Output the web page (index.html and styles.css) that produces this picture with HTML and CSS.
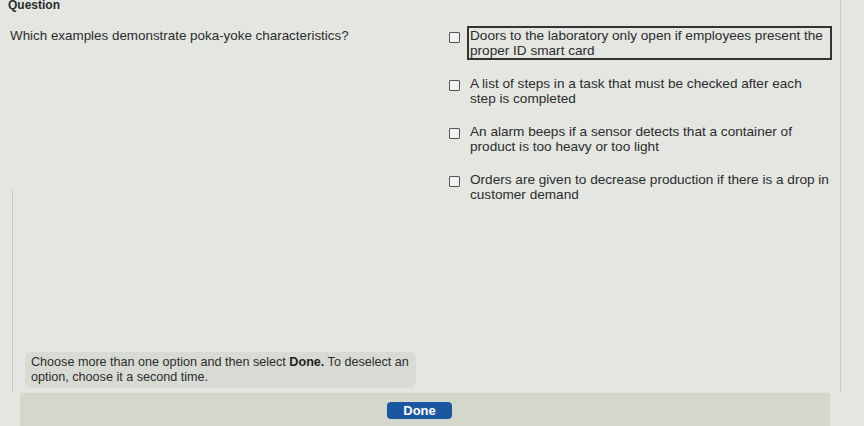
FILE: index.html
```html
<!DOCTYPE html>
<html lang="en">
<head>
<meta charset="UTF-8">
<meta name="viewport" content="width=device-width, initial-scale=1.0">
<title>Question</title>
<link rel="stylesheet" href="styles.css">
</head>
<body>

<div class="panel">
    <div class="titulo">Question</div>

    <div class="pergunta">
        <p class="enunciado">Which examples demonstrate poka-yoke characteristics?</p>

        <div class="opcoes">
            <label class="opcao ativa">
                <span class="caixa"></span>
                <span class="texto">Doors to the laboratory only open if employees present the proper ID smart card</span>
            </label>
            <label class="opcao">
                <span class="caixa"></span>
                <span class="texto">A list of steps in a task that must be checked after each step is completed</span>
            </label>
            <label class="opcao">
                <span class="caixa"></span>
                <span class="texto">An alarm beeps if a sensor detects that a container of product is too heavy or too light</span>
            </label>
            <label class="opcao">
                <span class="caixa"></span>
                <span class="texto">Orders are given to decrease production if there is a drop in customer demand</span>
            </label>
        </div>
    </div>

    <div class="dica">Choose more than one option and then select <b>Done.</b> To deselect an option, choose it a second time.</div>

    <div class="rodape">
        <button class="btn-done">Done</button>
    </div>
</div>

</body>
</html>
```

FILE: styles.css
```css
:root {
    --bg: #e3e6e1;
    --text: #2c2c2c;
    --linha: #c5cac4;
    --azul: #1b56a0;
}
body {
    margin: 0;
    width: 864px;
    height: 426px;
    overflow: hidden;
    background: var(--bg);
    color: var(--text);
    font-family: "Liberation Sans", Arial, sans-serif;
    font-size: 13px;
}
.panel {
    height: 426px;
    display: flex;
    flex-direction: column;
    position: relative;
}
.panel::before,
.panel::after {
    content: "";
    position: absolute;
    top: 0;
    bottom: 34px;
    width: 1px;
    background: var(--linha);
}
.panel::before {
    left: 12px;
    top: 190px;
}
.panel::after {
    left: 840px;
}
.titulo {
    font-size: 12px;
    font-weight: bold;
    line-height: 14px;
    margin: -2px 0 0 8px;
}
.pergunta {
    display: flex;
    margin-top: 15px;
}
.enunciado {
    width: 439px;
    margin: 1px 0 0 10px;
    font-size: 13.4px;
    line-height: 15px;
}
.opcoes {
    display: flex;
    flex-direction: column;
    gap: 14px;
    margin-top: -1px;
}
.opcao {
    display: flex;
    gap: 7px;
    cursor: pointer;
}
.caixa {
    width: 9px;
    height: 9px;
    margin-top: 6px;
    border: 1px solid #555;
    border-radius: 1px;
    background: #f2f3f0;
    flex: none;
}
.texto {
    box-sizing: border-box;
    width: 365px;
    border: 2px solid transparent;
    padding: 0 0 0 1px;
    font-size: 13.6px;
    line-height: 15px;
}
.opcao.ativa .texto {
    border-color: #333;
}
.dica {
    margin: auto 0 4px 25px;
    width: 382px;
    padding: 3px 3px 3px 6px;
    font-size: 12.6px;
    line-height: 15px;
    background: #d8dbd3;
    border-radius: 6px;
}
.dica b {
    color: #1f1f1f;
}
.rodape {
    margin-left: 20px;
    width: 810px;
    height: 34px;
    background: #d3d8ca;
    border-top: 1px solid #dfe3d8;
    box-sizing: border-box;
    padding: 9px 0 0 367px;
}
.btn-done {
    width: 65px;
    height: 17px;
    padding: 0;
    border: none;
    border-radius: 4px;
    background: var(--azul);
    color: #fff;
    font-family: "Liberation Sans", Arial, sans-serif;
    font-size: 13px;
    font-weight: bold;
    line-height: 17px;
    cursor: pointer;
}
```
